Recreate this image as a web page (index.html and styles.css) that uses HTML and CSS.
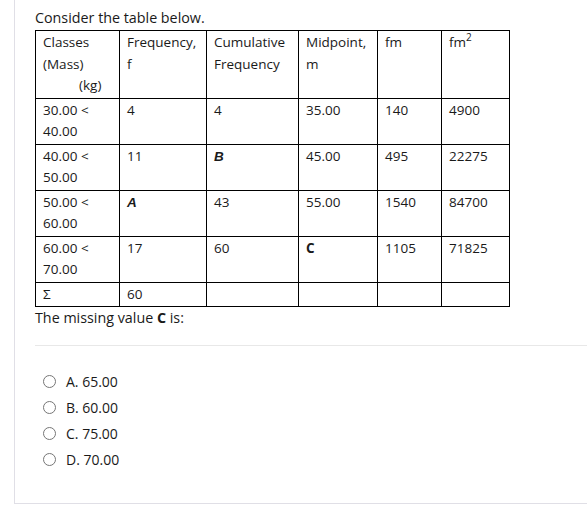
FILE: index.html
```html
<!DOCTYPE html>
<html>
<head>
<meta charset="utf-8">
<link rel="stylesheet" href="styles.css">
</head>
<body>
<div class="card">
  <div class="question">
    <p class="intro">Consider the table below.</p>
    <table class="data">
      <colgroup>
        <col class="c1"><col class="c2"><col class="c3"><col class="c4"><col class="c5"><col class="c6">
      </colgroup>
      <tr class="head">
        <td>Classes<br>(Mass)<br><span class="kg">(kg)</span></td>
        <td>Frequency,<br>f</td>
        <td>Cumulative<br>Frequency</td>
        <td>Midpoint,<br>m</td>
        <td>fm</td>
        <td>fm<sup>2</sup></td>
      </tr>
      <tr>
        <td>30.00 &lt;<br>40.00</td>
        <td>4</td>
        <td>4</td>
        <td>35.00</td>
        <td>140</td>
        <td>4900</td>
      </tr>
      <tr>
        <td>40.00 &lt;<br>50.00</td>
        <td>11</td>
        <td><b class="var">B</b></td>
        <td>45.00</td>
        <td>495</td>
        <td>22275</td>
      </tr>
      <tr>
        <td>50.00 &lt;<br>60.00</td>
        <td><b class="var">A</b></td>
        <td>43</td>
        <td>55.00</td>
        <td>1540</td>
        <td>84700</td>
      </tr>
      <tr>
        <td>60.00 &lt;<br>70.00</td>
        <td>17</td>
        <td>60</td>
        <td><b>C</b></td>
        <td>1105</td>
        <td>71825</td>
      </tr>
      <tr class="sum">
        <td>Σ</td>
        <td>60</td>
        <td></td>
        <td></td>
        <td></td>
        <td></td>
      </tr>
    </table>
    <p class="prompt">The missing value <b>C</b> is:</p>
  </div>
  <div class="answers">
    <label class="option"><span class="radio"></span><span>A. 65.00</span></label>
    <label class="option"><span class="radio"></span><span>B. 60.00</span></label>
    <label class="option"><span class="radio"></span><span>C. 75.00</span></label>
    <label class="option"><span class="radio"></span><span>D. 70.00</span></label>
  </div>
</div>
</body>
</html>
```
FILE: styles.css
```css
html, body {
  margin: 0;
  padding: 0;
  background: #fff;
}
body {
  font-family: "Open Sans", "Noto Sans", sans-serif;
  font-size: 14px;
  color: #1a1a1a;
}
.card {
  margin-left: 14px;
  border-left: 1px solid #e0dfe6;
  border-bottom: 1px solid #e0dfe6;
  height: 504px;
  box-sizing: border-box;
}
.question {
  padding: 8px 0 0 0;
  margin-left: 20px;
  border-bottom: 1px solid #e8e8e8;
}
.intro {
  margin: 0 0 2px 0;
  line-height: 20px;
  font-size: 14.3px;
}
.data {
  border-collapse: collapse;
  table-layout: fixed;
  width: 475px;
}
.c1 { width: 84px; }
.c2 { width: 87px; }
.c3 { width: 92px; }
.c4 { width: 79px; }
.c5 { width: 64px; }
.c6 { width: 68px; }
.data td {
  border: 1px solid #000;
  padding: 1px 6px 1px 7px;
  vertical-align: top;
  line-height: 21.5px;
  font-size: 13.5px;
  white-space: nowrap;
}
.kg {
  padding-left: 36px;
}
.data sup {
  font-size: 10px;
  line-height: 0;
  vertical-align: 6px;
}
.var {
  font-family: "Liberation Sans", Arial, sans-serif;
  font-style: italic;
  font-weight: bold;
}
.prompt {
  margin: 0;
  padding: 1px 0 17px 0;
  line-height: 20px;
  font-size: 14.3px;
}
.answers {
  padding: 26px 0 0 28px;
  display: flex;
  flex-direction: column;
  gap: 7px;
}
.option {
  display: flex;
  align-items: center;
  gap: 10px;
  line-height: 19px;
}
.radio {
  width: 11px;
  height: 11px;
  border: 1px solid #767676;
  border-radius: 50%;
}
```
